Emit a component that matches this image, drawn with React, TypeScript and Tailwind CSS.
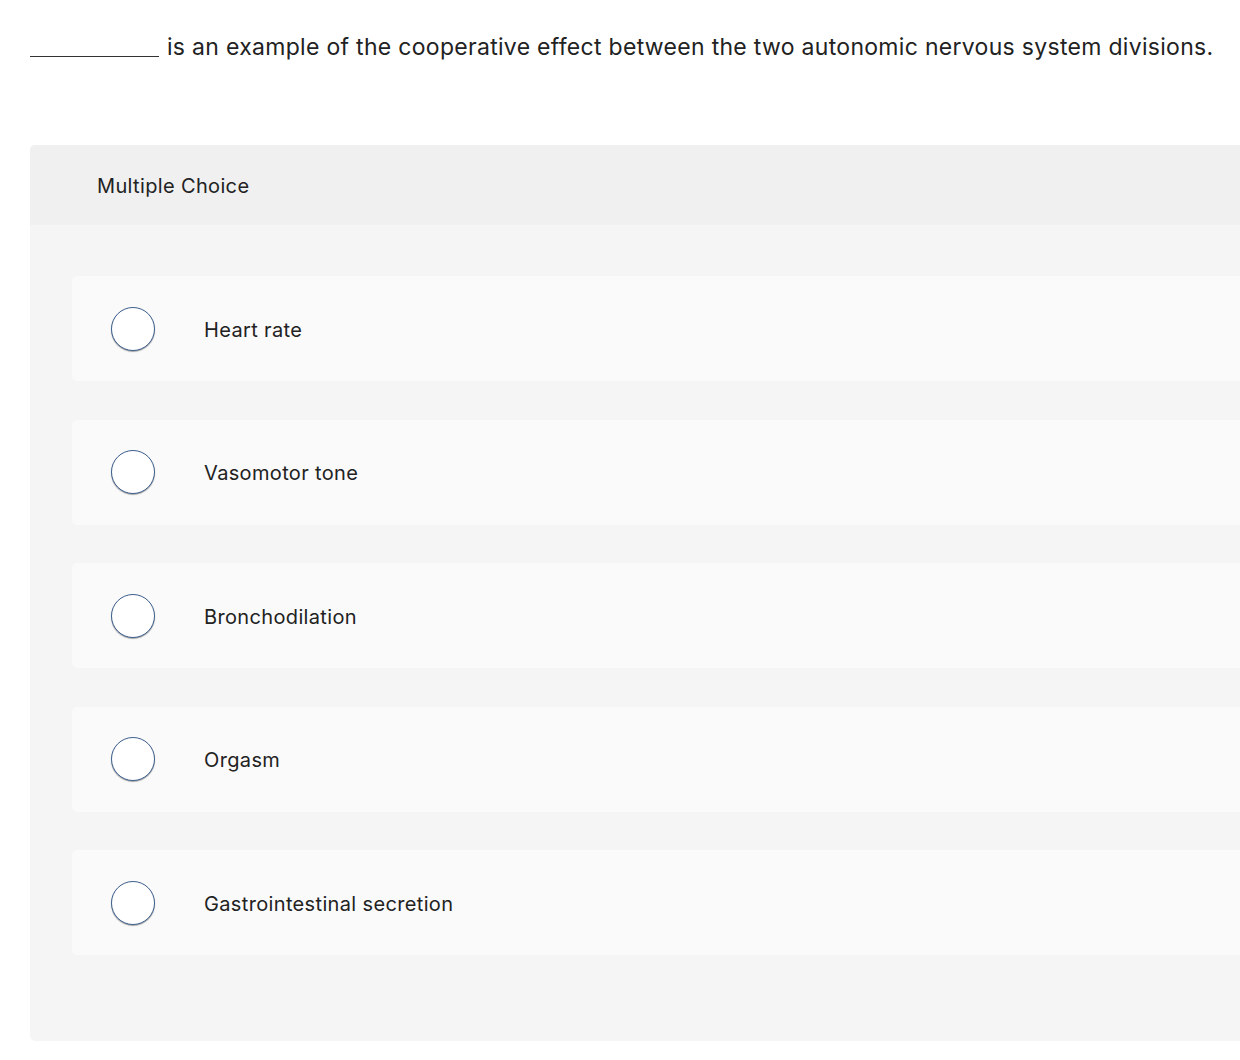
const options = [
  "Heart rate",
  "Vasomotor tone",
  "Bronchodilation",
  "Orgasm",
  "Gastrointestinal secretion",
];

const RadioCircle = () => (
  <span className="block w-[44px] h-[44px] rounded-full bg-white border-[1.5px] border-[#3d5f8f] shadow-[0_1px_1px_rgba(0,0,0,0.35)] shrink-0" />
);

export default function App() {
  return (
    <div className="w-[1240px] h-[1060px] overflow-hidden bg-white text-[#222] font-['Inter',sans-serif] tracking-[0.35px]">
      <div className="pt-[31px] pl-[30px] flex items-end">
        <span className="inline-block w-[129px] border-b-[1.5px] border-[#333] mb-[6px]" />
        <p className="ml-[8px] text-[23px] leading-[32px] tracking-[0.3px] whitespace-nowrap">
          is an example of the cooperative effect between the two autonomic nervous system divisions.
        </p>
      </div>

      <div className="mt-[82px] ml-[30px] w-[1260px] rounded-[5px] bg-[#f5f5f5] pb-[86px]">
        <div className="h-[80px] bg-[#f0f0f0] rounded-t-[5px] flex items-center pl-[67px] pt-[2px]">
          <span className="text-[20px]">Multiple Choice</span>
        </div>
        <div className="pt-[51px] pl-[42px] flex flex-col gap-[38.5px]">
          {options.map((opt) => (
            <label
              key={opt}
              className="h-[105px] bg-[#fafafa] rounded-[5px] flex items-center pl-[39px] cursor-pointer"
            >
              <RadioCircle />
              <span className="ml-[49px] pt-[2px] text-[20px]">{opt}</span>
            </label>
          ))}
        </div>
      </div>
    </div>
  );
}
